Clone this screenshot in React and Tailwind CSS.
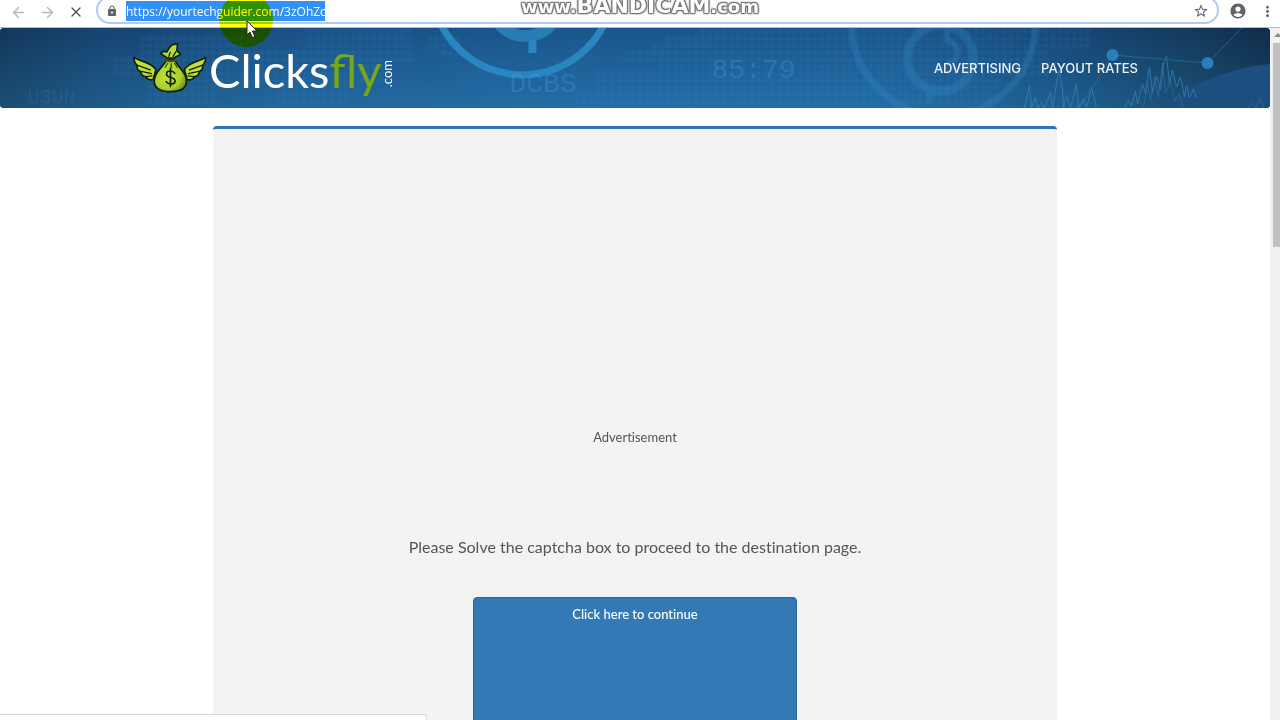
import React from 'react';
import { ArrowLeft, ArrowRight, X } from 'lucide-react';
import { MdLock, MdStarBorder, MdAccountCircle, MdMoreVert } from 'react-icons/md';

const NAV_LINKS = [
  { label: 'ADVERTISING', href: '#advertising' },
  { label: 'PAYOUT RATES', href: '#payout-rates' }
];

const BrowserToolbar = () => (
  <div className="h-7 shrink-0 overflow-hidden border-b border-[#b9bcc0] bg-white">
    <div className="-mt-1 flex h-7 items-center pl-[10px] pr-1 text-[#5f6368]">
      <button aria-label="Back" className="mr-3 mt-1 text-[#b4b6b9]">
        <ArrowLeft size={17} strokeWidth={2} />
      </button>
      <button aria-label="Forward" className="mr-3 mt-1 text-[#b4b6b9]">
        <ArrowRight size={17} strokeWidth={2} />
      </button>
      <button aria-label="Stop loading" className="mr-3 mt-1 text-[#505357]">
        <X size={16} strokeWidth={2} />
      </button>
      <div className="flex h-7 flex-1 items-center rounded-full border-2 border-[#aecbfa] pl-2 pr-2 pt-0.5">
        <MdLock size={12} className="mr-2 shrink-0" />
        <input
          aria-label="Address"
          type="text"
          defaultValue="https://yourtechguider.com/3zOhZc"
          className="h-5 w-[199px] bg-[#3390f5] font-['Open_Sans','Noto_Sans',sans-serif] text-[12px] text-white outline-none"
        />
        <button aria-label="Bookmark this page" className="ml-auto">
          <MdStarBorder size={16} />
        </button>
      </div>
      <button aria-label="Profile" className="ml-[10px] mt-0.5">
        <MdAccountCircle size={18} />
      </button>
      <button aria-label="Browser menu" className="ml-3 mt-0.5">
        <MdMoreVert size={17} />
      </button>
    </div>
  </div>
);

const BannerArt = () => (
  <svg
    aria-hidden="true"
    viewBox="0 0 1271 80"
    preserveAspectRatio="xMidYMid slice"
    className="absolute inset-0 h-full w-full"
  >
    <defs>
      <linearGradient id="base" x1="0" x2="1" y1="0" y2="0">
        <stop offset="0" stopColor="#14314f" />
        <stop offset="0.08" stopColor="#194570" />
        <stop offset="0.22" stopColor="#1e588e" />
        <stop offset="0.45" stopColor="#1f619b" />
        <stop offset="0.7" stopColor="#1e5e97" />
        <stop offset="0.84" stopColor="#194a78" />
        <stop offset="0.94" stopColor="#14344f" />
        <stop offset="1" stopColor="#0e2236" />
      </linearGradient>
      <linearGradient id="glow" x1="0" x2="0" y1="0" y2="1">
        <stop offset="0" stopColor="#123f70" stopOpacity="0.35" />
        <stop offset="1" stopColor="#2a8ac0" stopOpacity="0.32" />
      </linearGradient>
      <pattern id="cells" width="7" height="7" patternUnits="userSpaceOnUse">
        <rect x="1" y="1" width="5" height="5" rx="1" fill="#3f9bd3" />
      </pattern>
      <filter id="soft">
        <feGaussianBlur stdDeviation="0.8" />
      </filter>
    </defs>
    <rect width="1271" height="80" fill="url(#base)" />
    <rect width="1271" height="80" fill="url(#glow)" />

    {/* world map cells */}
    <g fill="url(#cells)" opacity="0.13" filter="url(#soft)">
      <path d="M140 7h105v14h60V0h110v35h-28v21h-40v21h-70V56H220v21H147V49h-35V28h28z" />
      <path d="M665 7h35V0h390v21h-40v28h-50v31H574V63h21V42h63z" />
      <path d="M427 7h35v21h-21v-7h-14zM609 21h14v14h42V14h-14v7h-42z" />
    </g>

    {/* coins */}
    <g fill="none" stroke="#2a86c0">
      <circle cx="523" cy="-44" r="91" strokeWidth="7" />
      <circle cx="526" cy="-27" r="35" strokeWidth="12" opacity="0.8" />
      <path d="M533 12v13" strokeWidth="8" />
      <path d="M520 1h9" strokeWidth="2" stroke="#1b4f86" />
    </g>
    <g fill="none" stroke="#3c9ad6" opacity="0.24" filter="url(#soft)">
      <circle cx="944" cy="-4" r="92" strokeWidth="7" />
      <circle cx="941" cy="30" r="33" strokeWidth="9" />
      <path d="M930 62v14M947 0v12c14 4 16 20 0 24" strokeWidth="6" />
    </g>

    <g fill="#49aadb" fontFamily="Liberation Mono, monospace" opacity="0.28">
      <text x="510" y="64" fontSize="28">DCBS</text>
      <text x="712" y="50" fontSize="28">85:79</text>
      <text x="28" y="75" fontSize="20" opacity="0.5">U3UN</text>
    </g>

    {/* market chart on the right */}
    <path d="M1162 80C1188 57 1228 40 1271 36V80z" fill="#1c4f80" />
    <g fill="none" stroke="#3d92cb" strokeWidth="1" opacity="0.6">
      <path d="M1025 80l3-14 2-8 2 22 4-11 2 11 4-5 3 5 6-16 2 16 5-30 2-8 3 21 1 17 3-13 4 13 6-24 2 24 5-9 3 9 5-21 3 13 2 8" />
      <path d="M1125 80l4-8 3 6 4-15 2 13 5-20 3 10 4-27 3 26 4-17 4 14 3-26 3-8 3 28 3-14 4 17 4-10 4 20 2-12 3 13 4-9 3 9" />
      <path d="M1144 80l4-25 3 18 4-24 4 20 4-34 3 30 5-12 4 20 5-8 3 15" opacity="0.6" />
      <path d="M1248 80l4-5 4 5 5-9 3 9" opacity="0.6" />
      <path d="M1080 80l33-53 95 8 34-35" stroke="#2f79b2" />
    </g>
    <circle cx="1113" cy="27" r="6" fill="#2b7ebd" />
    <circle cx="1208" cy="35" r="6" fill="#2b7ebd" />
  </svg>
);

const MoneyBag = () => (
  <svg
    aria-hidden="true"
    viewBox="396 120 226 156"
    className="h-[52px] w-[75px] shrink-0"
    stroke="#10200a"
    strokeWidth="5"
    strokeLinejoin="round"
    strokeLinecap="round"
  >
    <defs>
      <radialGradient id="bag" cx="0.4" cy="0.5" r="0.65">
        <stop offset="0" stopColor="#c3e23a" />
        <stop offset="0.65" stopColor="#a9cf2d" />
        <stop offset="1" stopColor="#5f8a15" />
      </radialGradient>
    </defs>
    <g fill="#bde03a">
      <path d="M402 166C424 181 452 178 468 203L460 232C449 237 440 230 438 224C428 224 422 216 423 209C411 204 410 196 412 191C405 184 402 174 402 166z" />
      <path d="M618 166C596 181 570 178 554 203L562 232C573 237 582 230 584 224C594 224 599 216 598 209C609 204 611 196 608 191C615 184 618 174 618 166z" />
      <path d="M413 190L451 204M424 208L455 215M439 224L456 222M607 190L569 204M597 208L566 215M583 224L565 222" strokeWidth="4" />
    </g>
    <path
      d="M500 173C493 194 463 207 463 237C463 262 483 269 512 269C543 269 562 260 560 233C558 207 531 194 525 173z"
      fill="url(#bag)"
    />
    <path
      d="M501 168C497 160 489 162 483 154C489 147 496 147 500 150C506 142 512 127 522 127L534 125C531 132 533 138 531 146L542 156C536 163 529 161 524 168z"
      fill="#b6da35"
    />
    <path d="M507 163L511 151M520 163L528 149" strokeWidth="4" />
    <path d="M498 174Q512 180 528 174" fill="none" stroke="#4c4a32" strokeWidth="8" />
    <path d="M504 184L496 196M514 185V197M524 184L532 196" strokeWidth="3" />
    <path
      d="M525 214C519 204 500 205 500 216C500 230 526 223 526 237C526 248 505 249 499 239M512 199V254"
      fill="none"
      strokeWidth="5"
    />
  </svg>
);

const SiteHeader = () => (
  <header className="relative h-20 shrink-0 overflow-hidden rounded bg-[#1e5a92]">
    <BannerArt />
    <div className="relative mx-auto flex h-full max-w-[1006px] items-center justify-between">
      <a href="#home" aria-label="Clicksfly.com" className="flex items-center">
        <MoneyBag />
        <span className="ml-0.5 mt-1 font-['Lato',sans-serif] text-[47px] leading-[52px] text-white">
          Clicks<span className="text-[#78a816]">fly</span>
        </span>
        <span className="mt-3 rotate-180 font-['Lato',sans-serif] text-[13px] leading-3 text-white [writing-mode:vertical-rl]">
          .com
        </span>
      </a>
      <nav className="flex gap-5 pt-0.5 font-['Inter',sans-serif] text-[13px] font-medium text-[#eef3f8]">
        {NAV_LINKS.map((link) => (
          <a key={link.href} href={link.href}>
            {link.label}
          </a>
        ))}
      </nav>
    </div>
  </header>
);

const CaptchaPanel = () => (
  <main className="mx-auto mt-[18px] flex w-full max-w-[844px] flex-1 flex-col items-center rounded-t border-t-[3px] border-[#2a74bf] bg-[#f3f3f3] font-['Lato',sans-serif] text-[#555] [font-variant-ligatures:none]">
    <p className="mt-[298px] text-[13px] leading-5">Advertisement</p>
    <p className="mt-[88px] text-[16px] leading-6">
      Please Solve the captcha box to proceed to the destination page.
    </p>
    <button className="mt-[38px] flex min-h-[150px] w-[324px] justify-center rounded border border-[#2a679c] bg-[#3279b6] pt-[6px] text-[13px] font-medium leading-5 text-white">
      Click here to continue
    </button>
  </main>
);

const ScrollTrack = () => (
  <div aria-hidden="true" className="flex w-[10px] shrink-0 flex-col items-end bg-[#f1f1f1]">
    <svg viewBox="0 0 7 15" className="h-[15px] w-[7px]">
      <path d="M1 9l4-4 2 2v2z" fill="#8a8a8a" />
    </svg>
    <div className="h-[204px] w-[7px] bg-[#c1c1c1]" />
  </div>
);

const Watermark = () => (
  <div className="pointer-events-none absolute inset-x-0 -top-2 flex items-baseline justify-center whitespace-nowrap font-['DejaVu_Sans',sans-serif] text-[18px] font-bold leading-7 text-white [text-shadow:0_0_1px_#555,1px_1px_1px_#777,-1px_-1px_1px_#777,1px_-1px_1px_#777,-1px_1px_1px_#777,0_0_3px_#777]">
    www.<span className="text-[22px]">BANDICAM</span>.com
  </div>
);

const Pointer = () => (
  <div aria-hidden="true" className="pointer-events-none">
    <div className="absolute -top-[7px] left-[219px] h-[54px] w-[54px] rounded-full bg-[#ffff00] mix-blend-multiply" />
    <svg viewBox="0 0 12 19" className="absolute left-[246px] top-5 h-[19px] w-3">
      <path
        d="M1 1v14l3-3 2.4 5.5 2.4-1L6.400 11H11z"
        fill="#fff"
        stroke="#222"
        strokeWidth="1"
      />
    </svg>
  </div>
);

const App = () => (
  <div className="relative isolate flex h-screen flex-col overflow-hidden bg-white">
    <BrowserToolbar />
    <div className="flex min-h-0 flex-1">
      <div className="flex min-w-0 flex-1 flex-col overflow-hidden">
        <SiteHeader />
        <CaptchaPanel />
      </div>
      <ScrollTrack />
    </div>
    <Watermark />
    <Pointer />
    {/* link status bubble */}
    <div className="absolute bottom-0 left-0 h-[6px] w-[427px] rounded-tr border-r border-t border-[#d8d8d8] bg-white" />
  </div>
);

export default App;
